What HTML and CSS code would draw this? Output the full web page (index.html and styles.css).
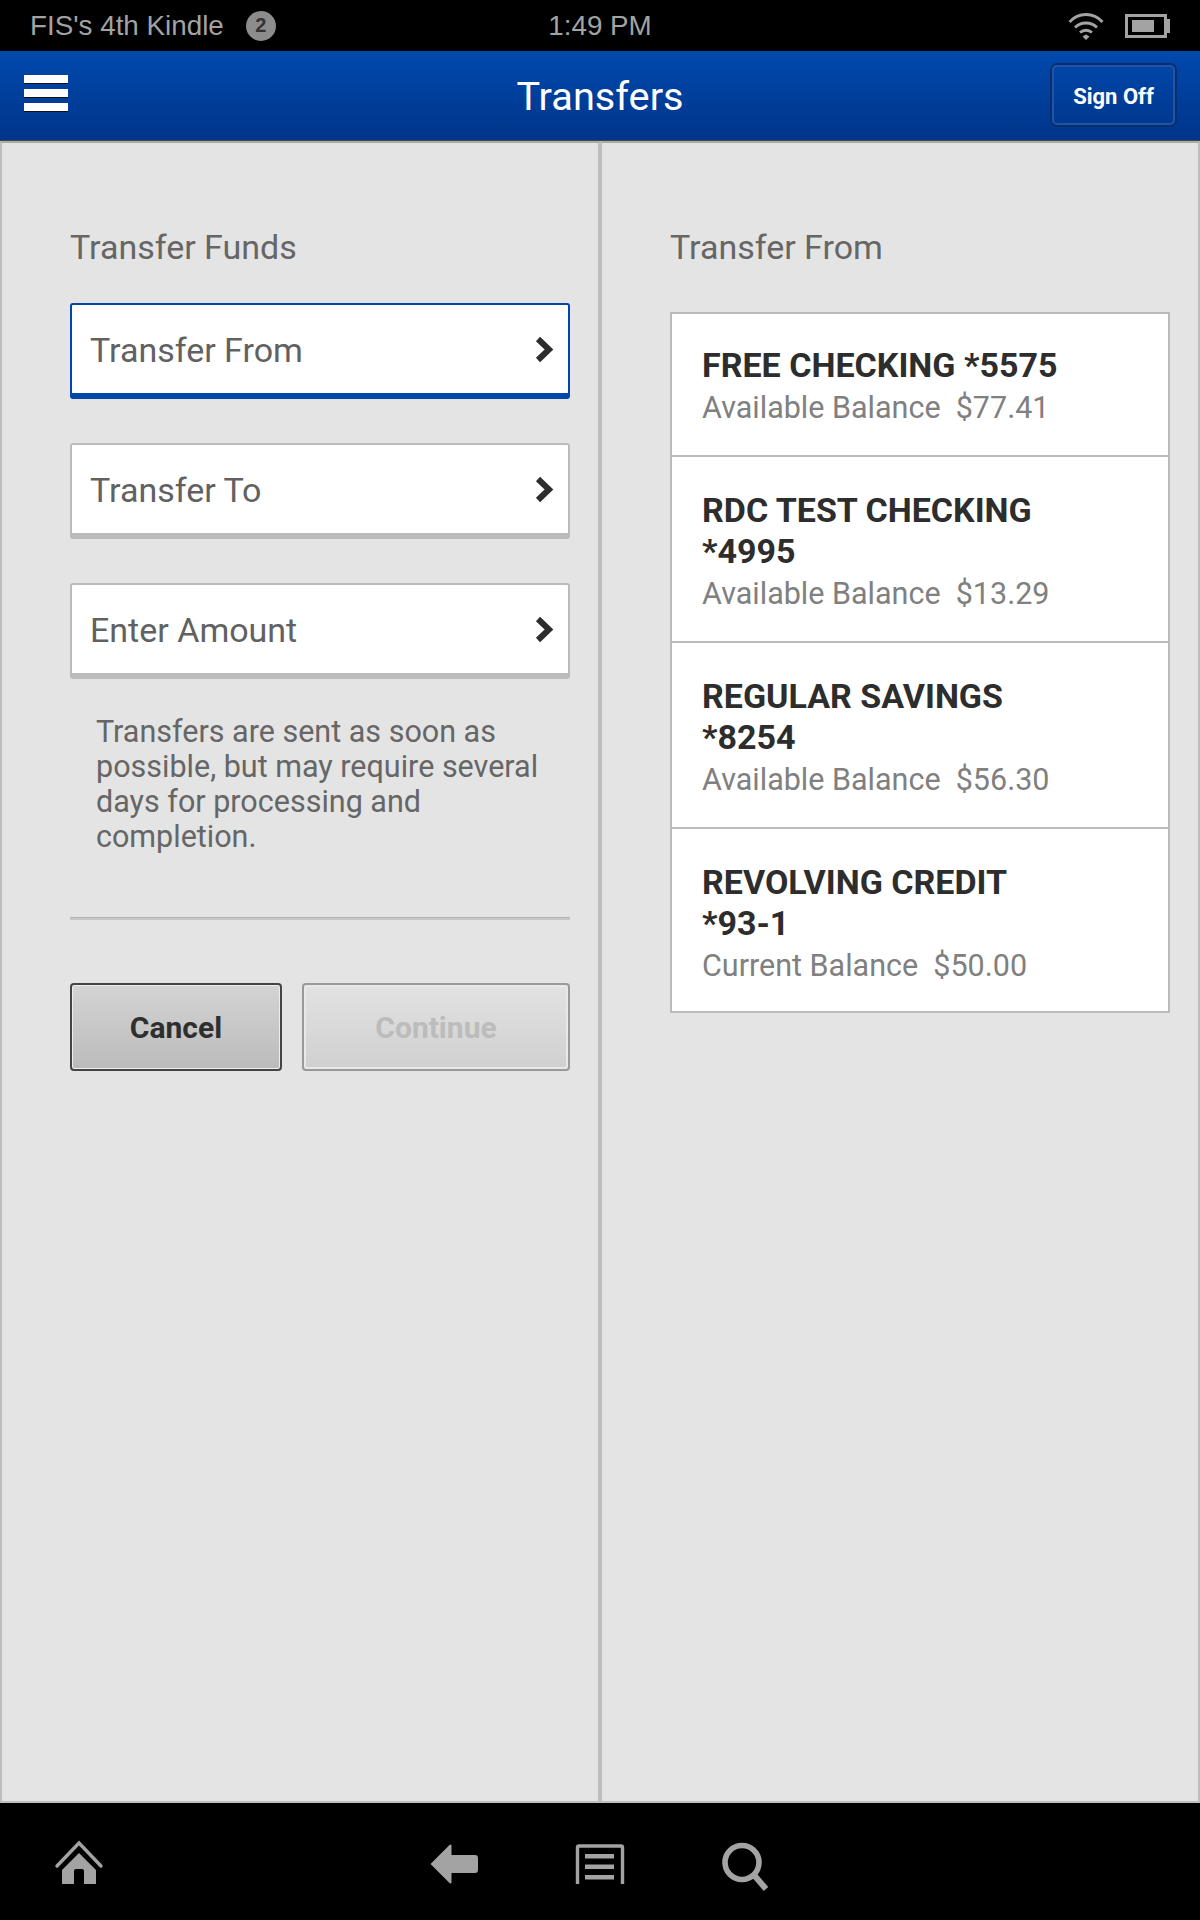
FILE: index.html
```html
<!DOCTYPE html>
<html lang="en">
<head>
<meta charset="utf-8">
<title>Transfers</title>
<link rel="stylesheet" href="styles.css">
</head>
<body>
<div class="screen">
  <div class="status">
    <div class="status-left"><span class="device">FIS's 4th Kindle</span><span class="badge">2</span></div>
    <div class="clock">1:49 PM</div>
    <div class="status-right">
      <svg class="wifi" width="36" height="28" viewBox="0 0 36 28"><g fill="none" stroke="#a3a3a3" stroke-width="2.800"><path d="M1.500 10C10.500 0 25.500 0 34.500 10"/><path d="M7 15.500C13 9.500 23 9.500 29 15.500"/><path d="M12 20.500C15.500 17.500 20.500 17.500 24 20.500"/></g><path d="M14.500 24.500L18 22.500L21.500 24.500L18 28Z" fill="#a3a3a3"/></svg>
      <svg class="battery" width="45" height="24" viewBox="0 0 45 24"><rect x="1.500" y="1.500" width="39" height="21" fill="none" stroke="#a3a3a3" stroke-width="3"/><rect x="7" y="6" width="22" height="12" fill="#a3a3a3"/><rect x="42" y="5" width="3" height="14" fill="#a3a3a3"/></svg>
    </div>
  </div>
  <header class="appbar">
    <div class="menu"><span></span><span></span><span></span></div>
    <h1 class="title">Transfers</h1>
    <div class="signoff">Sign Off</div>
  </header>
  <main class="panels">
    <section class="panel panel-left">
      <h2 class="heading">Transfer Funds</h2>
      <div class="field field-active"><span>Transfer From</span><svg class="chev" width="19" height="27" viewBox="0 0 19 27"><path d="M3 3L14 13.500L3 24" fill="none" stroke="#2d2d2d" stroke-width="6"/></svg></div>
      <div class="field"><span>Transfer To</span><svg class="chev" width="19" height="27" viewBox="0 0 19 27"><path d="M3 3L14 13.500L3 24" fill="none" stroke="#2d2d2d" stroke-width="6"/></svg></div>
      <div class="field"><span>Enter Amount</span><svg class="chev" width="19" height="27" viewBox="0 0 19 27"><path d="M3 3L14 13.500L3 24" fill="none" stroke="#2d2d2d" stroke-width="6"/></svg></div>
      <p class="note">Transfers are sent as soon as possible, but may require several days for processing and completion.</p>
      <div class="rule"></div>
      <div class="actions">
        <div class="btn btn-cancel">Cancel</div>
        <div class="btn btn-continue">Continue</div>
      </div>
    </section>
    <section class="panel panel-right">
      <h2 class="heading">Transfer From</h2>
      <ul class="accounts">
        <li class="account"><div class="acct-name">FREE CHECKING *5575</div><div class="acct-bal">Available Balance&nbsp; $77.41</div></li>
        <li class="account"><div class="acct-name">RDC TEST CHECKING *4995</div><div class="acct-bal">Available Balance&nbsp; $13.29</div></li>
        <li class="account"><div class="acct-name">REGULAR SAVINGS *8254</div><div class="acct-bal">Available Balance&nbsp; $56.30</div></li>
        <li class="account"><div class="acct-name">REVOLVING CREDIT *93-1</div><div class="acct-bal">Current Balance&nbsp; $50.00</div></li>
      </ul>
    </section>
  </main>
  <nav class="navbar">
    <svg class="nav-home" width="50" height="46" viewBox="0 0 50 46"><path d="M3 26L25 3L47 26" fill="none" stroke="#a3a3a3" stroke-width="3.400" stroke-linecap="round"/><path d="M25 13L42 30V44H30V31Q30 29 28 29H22Q20 29 20 31V44H8V30Z" fill="#a3a3a3"/></svg>
    <svg class="nav-back" width="50" height="42" viewBox="0 0 50 42"><path d="M0.500 20L19.500 1C20.500 0 21.500 0.500 21.500 2V11H45C47 11 48 12 48 14V26C48 28 47 29 45 29H21.500V38C21.500 39.500 20.500 40 19.500 39Z" fill="#a3a3a3"/></svg>
    <svg class="nav-list" width="50" height="40" viewBox="0 0 50 40"><path d="M2.500 40V3.500C2.500 2.500 3 2 4 2H46C47 2 47.500 2.500 47.500 3.500V40" fill="none" stroke="#a3a3a3" stroke-width="3.400"/><rect x="10" y="10" width="29" height="4.500" fill="#a3a3a3"/><rect x="10" y="20.500" width="29" height="4.500" fill="#a3a3a3"/><rect x="10" y="31" width="29" height="4.500" fill="#a3a3a3"/></svg>
    <svg class="nav-search" width="50" height="50" viewBox="0 0 50 50"><circle cx="21" cy="21.500" r="17" fill="none" stroke="#a3a3a3" stroke-width="5.600"/><path d="M33 34L45 48" stroke="#a3a3a3" stroke-width="6"/></svg>
  </nav>
</div>
</body>
</html>
```
FILE: styles.css
```css
* { box-sizing: border-box; }
html, body { margin: 0; padding: 0; }
body { background: #000; font-family: Roboto, "Liberation Sans", sans-serif; }
.screen { width: 1200px; height: 1920px; display: flex; flex-direction: column; overflow: hidden; }
.status { height: 51px; background: #000; color: #a3a3a3; position: relative; display: flex; align-items: center; justify-content: space-between; font-family: "Liberation Sans", sans-serif; font-size: 27.800px; flex: none; }
.status-left { display: flex; align-items: center; padding-left: 30px; }
.badge { width: 30px; height: 30px; border-radius: 50%; background: #8c8c8c; color: #333; font-size: 20px; font-weight: 700; margin-left: 22px; display: flex; align-items: center; justify-content: center; }
.clock { position: absolute; left: 0; right: 0; text-align: center; }
.status-right { display: flex; align-items: center; gap: 21px; padding-right: 30px; }
.appbar { height: 90px; flex: none; background: linear-gradient(#0049ad, #00358a); border-bottom: 1px solid #44484f; display: flex; align-items: center; justify-content: space-between; padding: 0 25px 0 24px; position: relative; }
.menu { width: 44px; display: flex; flex-direction: column; gap: 6px; margin-top: -5px; }
.menu span { height: 8px; background: #fff; box-shadow: 0 1px 0 #111; }
.title { position: absolute; left: 0; right: 0; margin: 0; padding-top: 2px; text-align: center; font-size: 39.700px; font-weight: 400; color: #fff; }
.signoff { width: 123px; height: 60px; margin-top: -1px; padding-top: 2px; position: relative; border: 2px solid #1f55a8; box-shadow: 0 0 0 2px #0a2e6c; border-radius: 5px; color: #fff; font-size: 22px; font-weight: 700; display: flex; align-items: center; justify-content: center; }
.panels { flex: 1; display: flex; background: #e4e4e4; }
.panel { height: 1662px; border-top: 2px solid #aaa; border-bottom: 2px solid #bdbdbd; padding-top: 82px; }
.panel-left { width: 602px; border-left: 2px solid #bdbdbd; border-right: 4px solid #bdbdbd; padding-left: 68px; padding-right: 28px; }
.panel-right { flex: 1; border-right: 2px solid #bdbdbd; padding-left: 68px; padding-right: 28px; }
.heading { margin: 0; font-size: 34px; line-height: 44px; font-weight: 400; color: #666; }
.field { height: 96px; margin-top: 34px; padding: 1px 14px 0 18px; background: #fff; border: 2px solid #bbb; border-bottom-width: 6px; border-radius: 3px; display: flex; align-items: center; justify-content: space-between; font-size: 34px; color: #616161; }
.field + .field { margin-top: 44px; }
.field-active { border-color: #0047ab; }
.note { margin: 35px 25px 0 26px; font-size: 30.500px; line-height: 35px; color: #666; }
.rule { margin-top: 63px; height: 3px; background: #c6c6c6; border-top: 1px solid #b4b4b4; }
.actions { display: flex; gap: 20px; margin-top: 63px; }
.btn { height: 88px; border-radius: 4px; display: flex; align-items: center; justify-content: center; font-size: 30px; font-weight: 700; }
.btn-cancel { width: 212px; border: 2px solid #444; box-shadow: inset 0 0 0 1px #eee; background: linear-gradient(#d4d4d4, #bbb); color: #2f2f2f; }
.btn-continue { flex: 1; border: 2px solid #999; box-shadow: inset 0 0 0 2px #e8e8e8; background: linear-gradient(#e2e2e2, #d0d0d0); color: #bcbcbc; }
.accounts { list-style: none; margin: 43px 0 0; padding: 0; background: #fff; border: 2px solid #bbb; }
.account { padding: 33px 100px 27px 30px; border-top: 2px solid #bbb; }
.account:first-child { border-top: 0; padding-top: 31px; }
.account:last-child { padding-bottom: 25px; }
.acct-name { font-size: 34px; line-height: 41px; font-weight: 700; color: #2d2d2d; }
.acct-bal { margin-top: 2px; font-size: 30.500px; line-height: 40px; color: #808080; white-space: nowrap; }
.navbar { flex: 1; background: #000; position: relative; }
.nav-home { position: absolute; left: 54px; top: 37px; }
.nav-back { position: absolute; left: 430px; top: 41px; }
.nav-list { position: absolute; left: 575px; top: 41px; }
.nav-search { position: absolute; left: 721px; top: 38px; }
```
